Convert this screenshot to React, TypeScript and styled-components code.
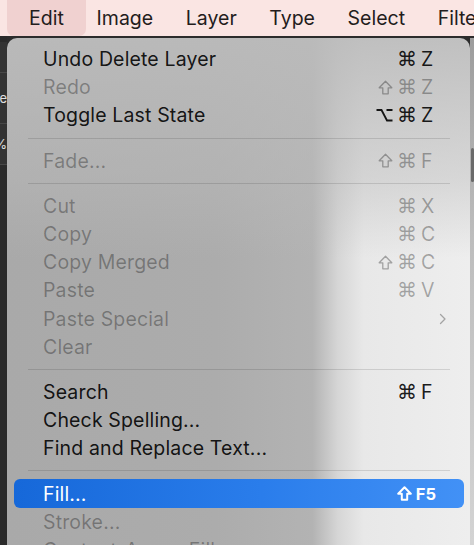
import React from "react";
import styled, { createGlobalStyle } from "styled-components";

const Global = createGlobalStyle`
  html, body { margin: 0; padding: 0; }
  body {
    width: 474px;
    height: 545px;
    overflow: hidden;
    background: #2c2c2c;
    font-family: Inter, "Noto Sans", "DejaVu Sans", sans-serif;
    -webkit-font-smoothing: antialiased;
  }
`;

const Screen = styled.div`
  width: 474px;
  height: 545px;
  display: flex;
  flex-direction: column;
  overflow: hidden;
`;

const MenuBar = styled.div`
  height: 36px;
  flex: none;
  display: flex;
  align-items: stretch;
  padding-left: 12.5px;
  background: #fae5e3;
  white-space: nowrap;
  overflow: hidden;
`;

const BarItem = styled.div<{ $active?: boolean }>`
  display: flex;
  align-items: center;
  padding: 0 ${(p) => (p.$active ? "22px" : "16.3px")};
  margin: 0 ${(p) => (p.$active ? "-5.5px" : "0")};
  font-size: 19.5px;
  font-weight: 430;
  color: #231c1c;
  background: ${(p) => (p.$active ? "#f0d1d0" : "transparent")};
  border-radius: 0 0 7px 7px;
  padding-bottom: 1px;
`;

const Body = styled.div`
  flex: 1;
  display: flex;
  min-height: 0;
`;

const LeftStrip = styled.div`
  width: 7px;
  flex: none;
  display: flex;
  flex-direction: column;
  background: #2a2a2a;
  padding-top: 6px;
`;

const StripCell = styled.div<{ $h: number }>`
  height: ${(p) => p.$h}px;
  border-bottom: 1px solid #474747;
  background: #333333;
  display: flex;
  align-items: center;
  justify-content: flex-end;
  overflow: hidden;
  color: #e0e0e0;
  font-size: 13px;
`;

const Panel = styled.div`
  flex: 1;
  margin-top: 2px;
  border-radius: 10px 10px 0 0;
  padding: 7px 6px 0 7px;
  background:
    linear-gradient(to bottom, rgba(187, 187, 187, 0.9) 0px, rgba(187, 187, 187, 0.45) 140px, rgba(187, 187, 187, 0) 220px),
    linear-gradient(
      to right,
      #a9a9a9 0%,
      #acacac 45%,
      #b3b3b3 66%,
      #d6d6d6 71.5%,
      #e8e8e8 77%,
      #eeeeee 100%
    );
  overflow: hidden;
`;

const RightStrip = styled.div`
  width: 4px;
  flex: none;
  margin-top: 2px;
  background: linear-gradient(to bottom, #9c9c9c 0px, #bdbdbd 200px, #d6d6d6 545px);
  display: flex;
  flex-direction: column;
  padding-top: 110px;
`;

const ScrollMark = styled.div`
  height: 34px;
  width: 3px;
  margin-left: 1px;
  background: #6a6a6a;
  border-radius: 2px;
`;

const Row = styled.div<{ $disabled?: boolean; $active?: boolean; $chevron?: boolean }>`
  height: 28.2px;
  display: flex;
  align-items: center;
  justify-content: space-between;
  padding: 0 ${(p) => (p.$chevron ? "17px" : "28px")} 0 29px;
  border-radius: 6px;
  font-size: 19.5px;
  font-weight: 430;
  line-height: 28px;
  white-space: nowrap;
  color: ${(p) =>
    p.$active ? "#ffffff" : p.$disabled ? "rgba(0,0,0,0.31)" : "rgba(0,0,0,0.9)"};
  background: ${(p) =>
    p.$active ? "linear-gradient(to right, #1668d9 0%, #2a7deb 55%, #4291f6 100%)" : "transparent"};
`;

const Label = styled.span`
  letter-spacing: 0.15px;
`;

const Keys = styled.span`
  display: flex;
  align-items: center;
  gap: 4px;
`;

const Glyph = styled.span`
  font-family: "DejaVu Sans", sans-serif;
  font-size: 20px;
  line-height: 1;
  display: flex;
  align-items: center;
`;

const Key = styled.span<{ $bold?: boolean }>`
  font-family: Inter, "DejaVu Sans", sans-serif;
  font-size: ${(p) => (p.$bold ? "16.5px" : "19.5px")};
  font-weight: ${(p) => (p.$bold ? 700 : 400)};
  min-width: 15px;
  text-align: left;
`;

const Separator = styled.div`
  height: 17px;
  display: flex;
  align-items: flex-start;
  padding: 8px 14px 0 14px;
  box-sizing: border-box;
`;

const Line = styled.div`
  flex: 1;
  height: 1px;
  background: rgba(0, 0, 0, 0.12);
`;

type Item =
  | { sep: true }
  | {
      sep?: false;
      label: string;
      mods?: string[];
      k?: string;
      disabled?: boolean;
      active?: boolean;
      chevron?: boolean;
    };

const items: Item[] = [
  { label: "Undo Delete Layer", mods: ["cmd"], k: "Z" },
  { label: "Redo", mods: ["shift", "cmd"], k: "Z", disabled: true },
  { label: "Toggle Last State", mods: ["opt", "cmd"], k: "Z" },
  { sep: true },
  { label: "Fade...", mods: ["shift", "cmd"], k: "F", disabled: true },
  { sep: true },
  { label: "Cut", mods: ["cmd"], k: "X", disabled: true },
  { label: "Copy", mods: ["cmd"], k: "C", disabled: true },
  { label: "Copy Merged", mods: ["shift", "cmd"], k: "C", disabled: true },
  { label: "Paste", mods: ["cmd"], k: "V", disabled: true },
  { label: "Paste Special", disabled: true, chevron: true },
  { label: "Clear", disabled: true },
  { sep: true },
  { label: "Search", mods: ["cmd"], k: "F" },
  { label: "Check Spelling..." },
  { label: "Find and Replace Text..." },
  { sep: true },
  { label: "Fill...", mods: ["shift"], k: "F5", active: true },
  { label: "Stroke...", disabled: true },
  { label: "Content-Aware Fill...", disabled: true },
];

const Chevron = () => (
  <svg width="8" height="12" viewBox="0 0 8 12" fill="none">
    <path d="M1.5 1.5 L6 6 L1.5 10.5" stroke="currentColor" strokeWidth="1.3" strokeLinecap="round" strokeLinejoin="round" />
  </svg>
);

const ShiftIcon = ({ bold }: { bold?: boolean }) => (
  <svg width="15" height="15" viewBox="0 0 15 15" fill="none">
    <path
      d="M7.5 1.2 L13.8 7.8 H10.2 V13.8 H4.8 V7.8 H1.2 Z"
      stroke="currentColor"
      strokeWidth={bold ? 2 : 1.3}
      strokeLinejoin="round"
    />
  </svg>
);

const OptIcon = () => (
  <svg width="17" height="14" viewBox="0 0 17 14" fill="none">
    <path d="M0.5 2 H5.5 L11 12.5 H16.5 M10.5 2 H16.5" stroke="currentColor" strokeWidth="1.8" strokeLinejoin="miter" />
  </svg>
);

const Mod = ({ m, bold }: { m: string; bold?: boolean }) => {
  if (m === "shift") return <ShiftIcon bold={bold} />;
  if (m === "opt") return <OptIcon />;
  return <Glyph>⌘</Glyph>;
};

export default function App() {
  return (
    <Screen>
      <Global />
      <MenuBar>
        <BarItem $active>Edit</BarItem>
        <BarItem>Image</BarItem>
        <BarItem>Layer</BarItem>
        <BarItem>Type</BarItem>
        <BarItem>Select</BarItem>
        <BarItem>Filter</BarItem>
      </MenuBar>
      <Body>
        <LeftStrip>
          <StripCell $h={30} />
          <StripCell $h={50}>e</StripCell>
          <StripCell $h={40}>%</StripCell>
        </LeftStrip>
        <Panel>
          {items.map((it, i) =>
            it.sep ? (
              <Separator key={i}>
                <Line />
              </Separator>
            ) : (
              <Row key={i} $disabled={it.disabled} $active={it.active} $chevron={it.chevron}>
                <Label>{it.label}</Label>
                {it.chevron ? (
                  <Chevron />
                ) : it.k ? (
                  <Keys>
                    {it.mods?.map((m, j) => (
                      <Mod key={j} m={m} bold={it.active} />
                    ))}
                    <Key $bold={it.active}>{it.k}</Key>
                  </Keys>
                ) : null}
              </Row>
            )
          )}
        </Panel>
        <RightStrip>
          <ScrollMark />
        </RightStrip>
      </Body>
    </Screen>
  );
}
